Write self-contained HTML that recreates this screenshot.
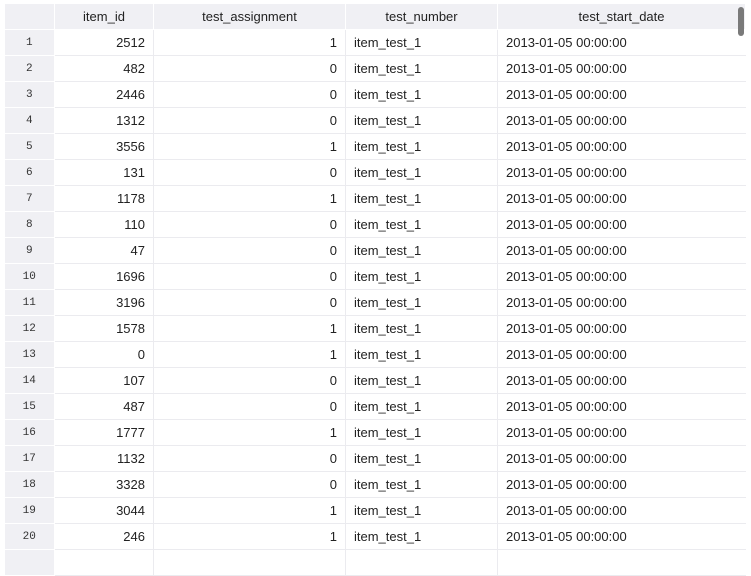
<!DOCTYPE html>
<html><head><style>
body{margin:0;background:#fff;width:751px;height:553px;overflow:hidden;font-family:"Liberation Sans",sans-serif;}
table{position:absolute;left:4px;top:4px;border-collapse:collapse;table-layout:fixed;font-size:13px;color:#222;}
td,th{height:25px;padding:0 8px;border:1px solid #ebebef;white-space:nowrap;overflow:hidden;}
th{background:#f0f0f4;font-weight:normal;text-align:center;border-color:#fff;border-top:none;color:#222;}
td.i{background:#f0f0f4;text-align:center;font-family:"Liberation Mono",monospace;font-size:11px;border-color:#fff;border-left:none;color:#333;}
td.n{text-align:right;}
tr td:last-child{border-right:none}
.sb{position:absolute;left:738px;top:7px;width:6px;height:29px;border-radius:3px;background:#7a7a7a;}
</style></head><body>
<table>
<colgroup><col style="width:50px"><col style="width:99px"><col style="width:192px"><col style="width:152px"><col style="width:248px"></colgroup>
<tr><th></th><th>item_id</th><th>test_assignment</th><th>test_number</th><th>test_start_date</th></tr>
<tr><td class="i">1</td><td class="n">2512</td><td class="n">1</td><td>item_test_1</td><td>2013-01-05 00:00:00</td></tr>
<tr><td class="i">2</td><td class="n">482</td><td class="n">0</td><td>item_test_1</td><td>2013-01-05 00:00:00</td></tr>
<tr><td class="i">3</td><td class="n">2446</td><td class="n">0</td><td>item_test_1</td><td>2013-01-05 00:00:00</td></tr>
<tr><td class="i">4</td><td class="n">1312</td><td class="n">0</td><td>item_test_1</td><td>2013-01-05 00:00:00</td></tr>
<tr><td class="i">5</td><td class="n">3556</td><td class="n">1</td><td>item_test_1</td><td>2013-01-05 00:00:00</td></tr>
<tr><td class="i">6</td><td class="n">131</td><td class="n">0</td><td>item_test_1</td><td>2013-01-05 00:00:00</td></tr>
<tr><td class="i">7</td><td class="n">1178</td><td class="n">1</td><td>item_test_1</td><td>2013-01-05 00:00:00</td></tr>
<tr><td class="i">8</td><td class="n">110</td><td class="n">0</td><td>item_test_1</td><td>2013-01-05 00:00:00</td></tr>
<tr><td class="i">9</td><td class="n">47</td><td class="n">0</td><td>item_test_1</td><td>2013-01-05 00:00:00</td></tr>
<tr><td class="i">10</td><td class="n">1696</td><td class="n">0</td><td>item_test_1</td><td>2013-01-05 00:00:00</td></tr>
<tr><td class="i">11</td><td class="n">3196</td><td class="n">0</td><td>item_test_1</td><td>2013-01-05 00:00:00</td></tr>
<tr><td class="i">12</td><td class="n">1578</td><td class="n">1</td><td>item_test_1</td><td>2013-01-05 00:00:00</td></tr>
<tr><td class="i">13</td><td class="n">0</td><td class="n">1</td><td>item_test_1</td><td>2013-01-05 00:00:00</td></tr>
<tr><td class="i">14</td><td class="n">107</td><td class="n">0</td><td>item_test_1</td><td>2013-01-05 00:00:00</td></tr>
<tr><td class="i">15</td><td class="n">487</td><td class="n">0</td><td>item_test_1</td><td>2013-01-05 00:00:00</td></tr>
<tr><td class="i">16</td><td class="n">1777</td><td class="n">1</td><td>item_test_1</td><td>2013-01-05 00:00:00</td></tr>
<tr><td class="i">17</td><td class="n">1132</td><td class="n">0</td><td>item_test_1</td><td>2013-01-05 00:00:00</td></tr>
<tr><td class="i">18</td><td class="n">3328</td><td class="n">0</td><td>item_test_1</td><td>2013-01-05 00:00:00</td></tr>
<tr><td class="i">19</td><td class="n">3044</td><td class="n">1</td><td>item_test_1</td><td>2013-01-05 00:00:00</td></tr>
<tr><td class="i">20</td><td class="n">246</td><td class="n">1</td><td>item_test_1</td><td>2013-01-05 00:00:00</td></tr>
<tr><td class="i"></td><td></td><td></td><td></td><td></td></tr>
</table>
<div class="sb"></div>
</body></html>
